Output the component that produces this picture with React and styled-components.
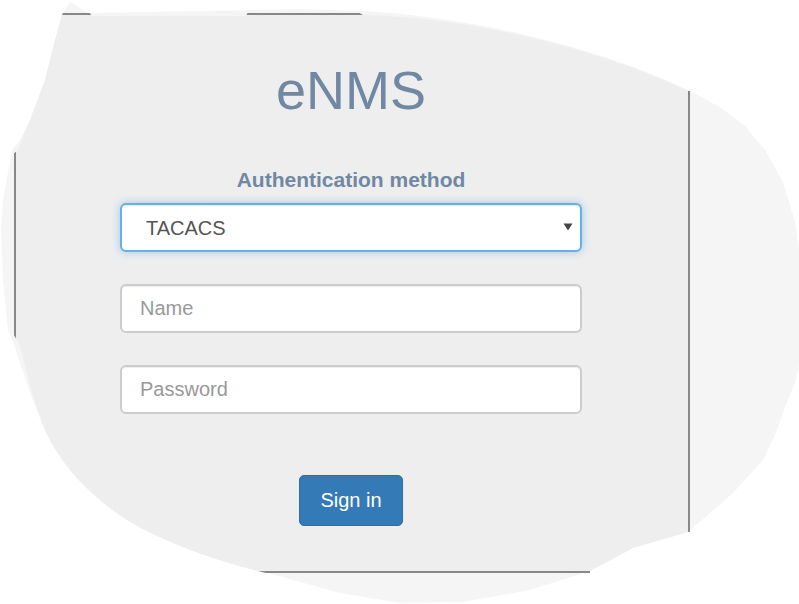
import React from 'react';
import styled, { createGlobalStyle } from 'styled-components';

const GlobalStyle = createGlobalStyle`
  html, body {
    margin: 0;
    padding: 0;
    background: #fff;
  }
  body {
    font-family: "Liberation Sans", Arial, sans-serif;
  }
`;

// outer soft blob drawn behind the login card
const BLOB_BACK =
  'M70 2 L88 13 L200 11 L300 9 L360 11 C470 16 600 48 688 90 L720 107 L745 126 L765 150 L783 182 L795 222 L802 270 L802 350 L796 380 L787 402 L775 435 L763 460 L733 493 L710 513 L688 532 L633 548 L590 571 L530 590 L463 602 L400 603 L340 593 L268 573 C220 562 170 545 130 522 C95 500 62 468 45 430 C32 400 24 375 14 345 L8 330 L3 280 L1 230 L3 200 L12 150 L20 140 L30 120 L45 80 L55 40 L62 14 Z';

// shape the card itself is cut to
const BLOB_CARD =
  "path('M63 12 L89 12 L92 16 L246 16 L248 12 L358 12 L363 15 C470 17 600 49 688 91 L700 91 L700 531 L688 532 L633 548 L590 571 L590 576 L268 576 L266 573 C220 562 170 545 130 522 C95 500 62 468 45 430 C34 402 27 375 20 345 L12 332 L12 155 L18 150 L30 120 L45 80 L55 40 Z')";

const Page = styled.div`
  position: relative;
  width: 799px;
  height: 604px;
  overflow: hidden;
`;

const Backdrop = styled.svg`
  position: absolute;
  inset: 0;
`;

const Clip = styled.div`
  position: relative;
  height: 100%;
  box-sizing: border-box;
  padding: 13px 0 0 14px;
  clip-path: ${BLOB_CARD};
`;

const Panel = styled.main`
  width: 676px;
  height: 560px;
  box-sizing: border-box;
  border: 2px solid #888;
  background: #eee;
  display: flex;
  flex-direction: column;
  align-items: center;
  padding-right: 2px;
`;

const Title = styled.h1`
  margin: 47px 0 0;
  font-size: 54px;
  line-height: 57px;
  font-weight: 400;
  color: #7088a2;
`;

const Label = styled.label`
  margin-top: 49px;
  font-size: 21px;
  line-height: 24px;
  font-weight: 700;
  color: #7088a2;
`;

const SelectWrap = styled.div`
  position: relative;
  margin-top: 11px;
  width: 462px;
  height: 49px;
`;

const Select = styled.select`
  appearance: none;
  width: 100%;
  height: 100%;
  box-sizing: border-box;
  padding: 0 40px 0 24px;
  border: 2px solid #66afe9;
  border-radius: 6px;
  background: #fff;
  outline: none;
  box-shadow: inset 0 1px 1px rgba(0, 0, 0, 0.075), 0 0 8px rgba(102, 175, 233, 0.6);
  font-family: inherit;
  font-size: 20px;
  color: #555;
`;

const Caret = styled.svg`
  position: absolute;
  right: 9px;
  top: 20px;
  pointer-events: none;
`;

const Input = styled.input`
  margin-top: 32px;
  width: 462px;
  height: 49px;
  box-sizing: border-box;
  padding: 0 18px;
  border: 2px solid #ccc;
  border-radius: 6px;
  background: #fff;
  box-shadow: inset 0 1px 1px rgba(0, 0, 0, 0.075);
  outline: none;
  font-family: inherit;
  font-size: 20px;
  color: #555;

  &::placeholder {
    color: #999;
  }
`;

const Button = styled.button`
  margin-top: 61px;
  width: 104px;
  height: 51px;
  box-sizing: border-box;
  border: 1.5px solid #2e6da4;
  border-radius: 5px;
  background: #337ab7;
  color: #fff;
  font-family: inherit;
  font-size: 20px;
  cursor: pointer;
`;

export default function App() {
  return (
    <>
      <GlobalStyle />
      <Page>
        <Backdrop width="799" height="604" viewBox="0 0 799 604">
          <path d={BLOB_BACK} fill="#f5f5f5" />
        </Backdrop>
        <Clip>
          <Panel>
            <Title>eNMS</Title>
            <Label htmlFor="method">Authentication method</Label>
            <SelectWrap>
              <Select id="method" defaultValue="TACACS">
                <option value="Local">Local</option>
                <option value="TACACS">TACACS</option>
              </Select>
              <Caret width="10" height="8" viewBox="0 0 10 8">
                <path d="M0.5 0.5 L9.5 0.5 L5 7.5 Z" fill="#444" />
              </Caret>
            </SelectWrap>
            <Input type="text" placeholder="Name" />
            <Input type="password" placeholder="Password" />
            <Button type="submit">Sign in</Button>
          </Panel>
        </Clip>
      </Page>
    </>
  );
}
